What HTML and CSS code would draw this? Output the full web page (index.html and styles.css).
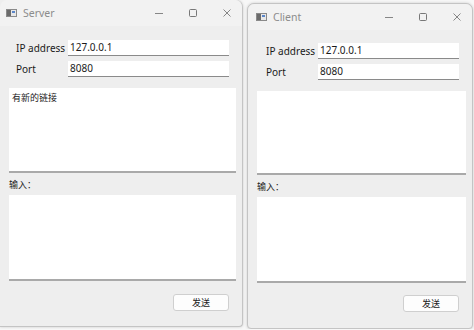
FILE: index.html
```html
<!DOCTYPE html>
<html lang="zh">
<head>
  <meta charset="UTF-8" />
  <title>Server / Client</title>
  <link rel="stylesheet" href="styles.css">
</head>
<body>
  <div class="desk">

    <!-- Server window -->
    <div class="window server">
      <div class="titlebar">
        <svg class="app-icon" width="11" height="8" viewBox="0 0 11 8">
          <rect x="0.5" y="0.5" width="10" height="7" fill="#e8e8e8" stroke="#8a8a8a"/>
          <rect x="1" y="1" width="4" height="6" fill="#6b6b6b"/>
          <rect x="6" y="2" width="3" height="2" fill="#5a86c8"/>
        </svg>
        <span class="title">Server</span>
        <div class="controls">
          <svg width="10" height="10" viewBox="0 0 10 10"><path d="M1 5.5h8" stroke="#6a6a6a" stroke-width="0.8"/></svg>
          <svg width="10" height="10" viewBox="0 0 10 10"><rect x="1.5" y="1.5" width="7" height="7" rx="1" fill="none" stroke="#6a6a6a" stroke-width="0.9"/></svg>
          <svg width="10" height="10" viewBox="0 0 10 10"><path d="M1.5 1.5l7 7M8.5 1.5l-7 7" stroke="#6a6a6a" stroke-width="0.8"/></svg>
        </div>
      </div>
      <div class="content">
        <div class="form">
          <div class="row"><span class="label">IP address</span><div class="field">127.0.0.1</div></div>
          <div class="row"><span class="label">Port</span><div class="field">8080</div></div>
        </div>
        <div class="box log">有新的链接</div>
        <div class="caption">输入：</div>
        <div class="box input"></div>
        <div class="footer"><button class="btn">发送</button></div>
      </div>
    </div>

    <!-- Client window -->
    <div class="window client">
      <div class="titlebar">
        <svg class="app-icon" width="11" height="8" viewBox="0 0 11 8">
          <rect x="0.5" y="0.5" width="10" height="7" fill="#e8e8e8" stroke="#8a8a8a"/>
          <rect x="1" y="1" width="4" height="6" fill="#6b6b6b"/>
          <rect x="6" y="2" width="3" height="2" fill="#5a86c8"/>
        </svg>
        <span class="title">Client</span>
        <div class="controls">
          <svg width="10" height="10" viewBox="0 0 10 10"><path d="M1 5.5h8" stroke="#6a6a6a" stroke-width="0.8"/></svg>
          <svg width="10" height="10" viewBox="0 0 10 10"><rect x="1.5" y="1.5" width="7" height="7" rx="1" fill="none" stroke="#6a6a6a" stroke-width="0.9"/></svg>
          <svg width="10" height="10" viewBox="0 0 10 10"><path d="M1.5 1.5l7 7M8.5 1.5l-7 7" stroke="#6a6a6a" stroke-width="0.8"/></svg>
        </div>
      </div>
      <div class="content">
        <div class="form">
          <div class="row"><span class="label">IP address</span><div class="field">127.0.0.1</div></div>
          <div class="row"><span class="label">Port</span><div class="field">8080</div></div>
        </div>
        <div class="box log"></div>
        <div class="caption">输入：</div>
        <div class="box input"></div>
        <div class="footer"><button class="btn">发送</button></div>
      </div>
    </div>

  </div>
</body>
</html>
```

FILE: styles.css
```css
body {
  margin: 0;
  background: #f7f7f7;
  font-family: "Noto Sans", "Noto Sans CJK SC", sans-serif;
  font-size: 10px;
  color: #1a1a1a;
}

.desk {
  display: flex;
  align-items: flex-start;
  gap: 4px;
}

.window {
  background: #eeeeee;
  border: 1px solid #c4c4c4;
  border-radius: 7px 7px 4px 4px;
  box-shadow: 0 0 3px rgba(0, 0, 0, 0.18);
  display: flex;
  flex-direction: column;
}

.server {
  width: 242px;
  height: 326px;
  border-top: none;
  border-left: none;
  border-radius: 0 7px 4px 0;
}

.client {
  width: 224px;
  height: 324px;
  margin-top: 3px;
}

/* title bar */
.titlebar {
  height: 26px;
  display: flex;
  align-items: center;
  background: #f2f2f2;
  border-radius: 7px 7px 0 0;
  padding-left: 6px;
}

.client .titlebar {
  padding-left: 8px;
}

.app-icon {
  margin-right: 6px;
}

.title {
  color: #8c8c8c;
  font-size: 10.5px;
}

.controls {
  margin-left: auto;
  display: flex;
  align-items: center;
  gap: 24px;
  padding-right: 10px;
}

/* body of the window */
.content {
  flex: 1;
  display: flex;
  flex-direction: column;
  padding: 0 6px 0 9px;
}

.client .content {
  padding: 0 6px 0 9px;
}

.form {
  display: flex;
  flex-direction: column;
  gap: 5px;
  padding: 14px 7px 0 7px;
}

.client .form {
  padding: 13px 7px 0 9px;
}

.row {
  display: flex;
  align-items: center;
  height: 16px;
}

.label {
  width: 52px;
}

.field {
  flex: 1;
  height: 15px;
  line-height: 15px;
  background: #ffffff;
  border-bottom: 1px solid #8a8a8a;
  padding-left: 2px;
}

.box {
  background: #ffffff;
  border-bottom: 2px solid #a9a9a9;
}

.log {
  margin-top: 11px;
  height: 85px;
  padding: 3px 3px;
  box-sizing: border-box;
  font-size: 9px;
}

.client .log {
  height: 84px;
}

.caption {
  height: 22px;
  line-height: 24px;
  font-size: 9px;
}

.input {
  height: 84px;
}

.footer {
  display: flex;
  justify-content: flex-end;
  padding: 13px 7px 0 0;
}

.client .footer {
  padding-top: 12px;
}

.btn {
  width: 56px;
  height: 17px;
  padding: 0;
  background: #fdfdfd;
  border: 1px solid #cfcfcf;
  border-radius: 3px;
  font-family: inherit;
  font-size: 9px;
  color: #1a1a1a;
}
```
